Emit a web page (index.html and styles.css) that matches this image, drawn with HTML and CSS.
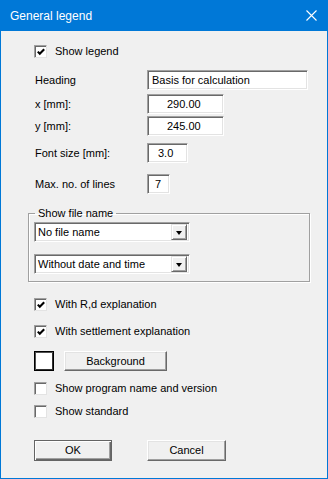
FILE: index.html
```html
<html lang="en">
<head>
    <meta charset="UTF-8">
    <title>General legend</title>
    <link rel="stylesheet" href="styles.css">
</head>
<body>
    <div class="window">
        <div class="titlebar">
            <span class="title">General legend</span>
            <svg class="close" width="11" height="11" viewBox="0 0 11 11">
                <path d="M0.5 0.5L10.5 10.5M10.5 0.5L0.5 10.5" stroke="#fff" stroke-width="1.1" fill="none"/>
            </svg>
        </div>

        <div class="dialog">
            <div class="check row-legend">
                <span class="box"><svg width="8" height="8" viewBox="0 0 8 8"><polyline points="0.8,3.6 2.8,5.8 7.2,1.2" stroke="#000" stroke-width="2.1" fill="none"/></svg></span>
                <span>Show legend</span>
            </div>

            <div class="field row-heading">
                <span class="lbl">Heading</span>
                <span class="edit w-heading">Basis for calculation</span>
            </div>
            <div class="field row-x">
                <span class="lbl">x [mm]:</span>
                <span class="edit w-coord">290.00</span>
            </div>
            <div class="field row-y">
                <span class="lbl">y [mm]:</span>
                <span class="edit w-coord">245.00</span>
            </div>
            <div class="field row-font">
                <span class="lbl">Font size [mm]:</span>
                <span class="edit w-font">3.0</span>
            </div>
            <div class="field row-max">
                <span class="lbl">Max. no. of lines</span>
                <span class="edit w-max">7</span>
            </div>

            <fieldset class="group">
                <legend>Show file name</legend>
                <div class="combo">
                    <span class="combo-text">No file name</span>
                    <span class="combo-btn"><span class="arrow"></span></span>
                </div>
                <div class="combo combo-second">
                    <span class="combo-text">Without date and time</span>
                    <span class="combo-btn"><span class="arrow"></span></span>
                </div>
            </fieldset>

            <div class="check row-rd">
                <span class="box"><svg width="8" height="8" viewBox="0 0 8 8"><polyline points="0.8,3.6 2.8,5.8 7.2,1.2" stroke="#000" stroke-width="2.1" fill="none"/></svg></span>
                <span>With R,d explanation</span>
            </div>
            <div class="check row-settle">
                <span class="box"><svg width="8" height="8" viewBox="0 0 8 8"><polyline points="0.8,3.6 2.8,5.8 7.2,1.2" stroke="#000" stroke-width="2.1" fill="none"/></svg></span>
                <span>With settlement explanation</span>
            </div>

            <div class="color-row">
                <span class="swatch"></span>
                <span class="btn btn-bg">Background</span>
            </div>

            <div class="check row-program">
                <span class="box"></span>
                <span>Show program name and version</span>
            </div>
            <div class="check row-standard">
                <span class="box"></span>
                <span>Show standard</span>
            </div>

            <div class="actions">
                <span class="btn btn-default">OK</span>
                <span class="btn btn-cancel">Cancel</span>
            </div>
        </div>
    </div>
</body>
</html>
```

FILE: styles.css
```css
body{
    margin: 0;
    padding: 0;
    font-family: "Liberation Sans", Arial, sans-serif;
    font-size: 11px;
    color: #000;
}

.window{
    width: 328px;
    height: 479px;
    box-sizing: border-box;
    border: 1px solid #0078d7;
    border-top: 0;
    background-color: #f0f0f0;
}

.titlebar{
    height: 31px;
    background-color: #0078d7;
    color: #fff;
    display: flex;
    align-items: center;
    justify-content: space-between;
    padding: 0 10px 0 9px;
}
.title{
    font-size: 12px;
}

.dialog{
    display: flex;
    flex-direction: column;
    align-items: flex-start;
    padding: 14px 0 0 33px;
}

/* checkboxes */
.check{
    display: flex;
    align-items: center;
    gap: 8px;
    height: 13px;
    line-height: 13px;
}
.box{
    width: 13px;
    height: 13px;
    box-sizing: border-box;
    background-color: #fff;
    border: 1px solid;
    border-color: #a0a0a0 #e3e3e3 #e3e3e3 #a0a0a0;
    box-shadow: inset 1px 1px 0 #696969;
    display: flex;
    align-items: center;
    justify-content: center;
    padding: 1px 0 0 1px;
}
.row-rd{ margin-top: 16px; }
.row-settle{ margin-top: 14px; }
.row-program{ margin-top: 11px; }
.row-standard{ margin-top: 10px; }

/* label + edit rows */
.field{
    display: flex;
    align-items: center;
}
.lbl{
    width: 113px;
    padding-left: 1px;
    box-sizing: border-box;
}
.edit{
    height: 20px;
    box-sizing: border-box;
    background-color: #fff;
    border: 1px solid;
    border-color: #a0a0a0 #fff #fff #a0a0a0;
    box-shadow: inset 1px 1px 0 #696969, inset -1px -1px 0 #e3e3e3;
    line-height: 18px;
    white-space: nowrap;
}
.w-heading{ width: 161px; padding-left: 4px; }
.w-coord{ width: 77px; padding-left: 19px; }
.w-font{ width: 41px; padding-left: 10px; }
.w-max{ width: 23px; padding-left: 7px; }

.row-heading{ margin-top: 12px; }
.row-x{ margin-top: 4px; }
.row-y{ margin-top: 2px; }
.row-font{ margin-top: 7px; }
.row-max{ margin-top: 11px; }

/* group box */
.group{
    margin: 13px 0 0 -6px;
    width: 282px;
    box-sizing: border-box;
    padding: 2px 5px 7px 5px;
    border: 1px solid #a0a0a0;
    box-shadow: 1px 1px 0 #fff, inset 1px 1px 0 #fff;
}
.group legend{
    padding: 0 3px;
    margin-left: 1px;
    line-height: 13px;
}

.combo{
    width: 156px;
    height: 20px;
    box-sizing: border-box;
    background-color: #fff;
    border: 1px solid;
    border-color: #a0a0a0 #fff #fff #a0a0a0;
    box-shadow: inset 1px 1px 0 #696969, inset -1px -1px 0 #e3e3e3;
    display: flex;
    align-items: center;
    justify-content: space-between;
    padding: 2px 2px 2px 3px;
}
.combo-second{
    margin-top: 12px;
}
.combo-btn{
    width: 16px;
    height: 16px;
    box-sizing: border-box;
    background-color: #f0f0f0;
    border: 1px solid;
    border-color: #e3e3e3 #696969 #696969 #e3e3e3;
    box-shadow: inset 1px 1px 0 #fff, inset -1px -1px 0 #a0a0a0;
    display: flex;
    align-items: center;
    justify-content: center;
}
.arrow{
    width: 0;
    height: 0;
    border-left: 3.5px solid transparent;
    border-right: 3.5px solid transparent;
    border-top: 4px solid #000;
    margin-top: 1px;
}

/* colour + buttons */
.color-row{
    display: flex;
    align-items: center;
    gap: 10px;
    margin-top: 13px;
}
.swatch{
    width: 20px;
    height: 20px;
    box-sizing: border-box;
    background-color: #fff;
    border: 1px solid #000;
    box-shadow: inset 1px 1px 0 #505050, inset -1px -1px 0 #303030;
}
.btn{
    height: 20px;
    box-sizing: border-box;
    background-color: #f0f0f0;
    border: 1px solid;
    border-color: #fff #696969 #696969 #fff;
    box-shadow: inset -1px -1px 0 #a0a0a0, inset 1px 1px 0 #e3e3e3;
    text-align: center;
    line-height: 18px;
}
.btn-bg{ width: 103px; }

.actions{
    display: flex;
    gap: 35px;
    margin-top: 22px;
}
.btn-default{
    width: 78px;
    height: 21px;
    border-color: #646464;
    box-shadow: inset 1px 1px 0 #fff, inset -1px -1px 0 #696969, inset -2px -2px 0 #a0a0a0;
    line-height: 19px;
}
.btn-cancel{
    width: 79px;
    height: 21px;
    line-height: 19px;
}
```
